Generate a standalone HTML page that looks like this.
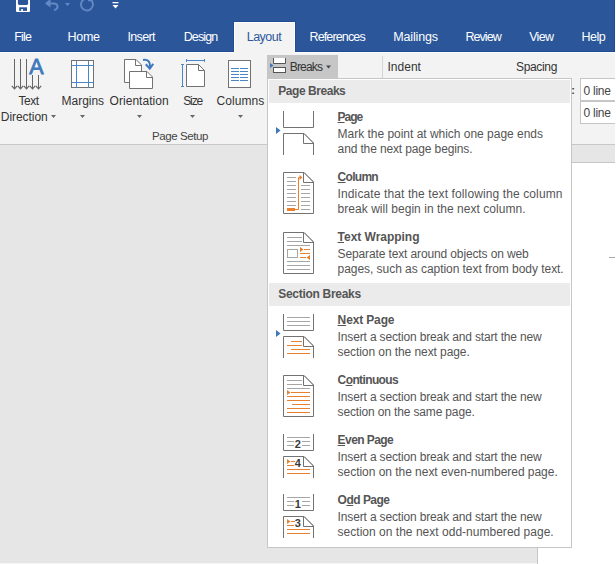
<!DOCTYPE html>
<html><head><meta charset="utf-8"><title>Breaks</title><style>
html,body{margin:0;padding:0}
body{width:616px;height:564px;overflow:hidden;position:relative;background:#e6e6e6;font-family:'Liberation Sans',sans-serif;}
.b{position:absolute}
.t{position:absolute;white-space:pre;line-height:16px;height:16px;}
u{text-decoration:underline;text-underline-offset:0.5px;text-decoration-thickness:1px}
svg{position:absolute;left:0;top:0}
.num{font:bold 11px 'Liberation Sans',sans-serif;fill:#3a3a3a;text-anchor:middle}
</style></head>
<body>

<div class="b" style="left:0;top:0;width:616px;height:52px;background:#2b579a"></div>
<div class="b" style="left:0;top:51px;width:616px;height:1px;background:#1f4c93"></div>
<div class="b" style="left:234px;top:22px;width:61px;height:31px;background:#f3f3f3;border:1px solid #fff;border-bottom:0;box-sizing:border-box;box-shadow:0 0 0 1px #1f4c93"></div>
<div class="b" style="left:0;top:52px;width:616px;height:92px;background:#f3f3f3"></div>
<div class="b" style="left:0;top:52px;width:234px;height:1px;background:#fdfdfd"></div>
<div class="b" style="left:295px;top:52px;width:321px;height:1px;background:#fdfdfd"></div>
<div class="b" style="left:0;top:144px;width:616px;height:1px;background:#c8c8c8"></div>
<div class="b" style="left:382px;top:56px;width:1px;height:23px;background:#d4d4d4"></div>
<div class="b" style="left:537px;top:162px;width:79px;height:402px;background:#fff;border-left:1px solid #c6c6c6;border-top:1px solid #c6c6c6;box-sizing:border-box"></div>
<div class="b" style="left:580px;top:78px;width:36px;height:23px;background:#fff;border:1px solid #c6c6c6;border-right:0;box-sizing:border-box"></div>
<div class="b" style="left:580px;top:101px;width:36px;height:23px;background:#fff;border:1px solid #c6c6c6;border-right:0;box-sizing:border-box"></div>
<div class="b" style="left:267px;top:55px;width:71px;height:24px;background:#c6c6c6"></div>
<div class="b" style="left:267px;top:78px;width:305px;height:470px;background:#fff;border:1px solid #c6c6c6;box-sizing:border-box"></div>
<div class="b" style="left:269px;top:80px;width:301px;height:23px;background:#ebebeb"></div>
<div class="b" style="left:269px;top:283px;width:301px;height:23px;background:#ebebeb"></div>
<div class="b" style="left:609px;top:257px;width:6px;height:1px;background:#ababab"></div>
<div class="b" style="left:614px;top:0;width:1px;height:52px;background:#1f4c93"></div>
<div class="b" style="left:615px;top:0;width:1px;height:564px;background:#fff"></div>
<div class="b" style="left:0;top:563px;width:537px;height:1px;background:#f6f6f6"></div>

<svg width="616" height="564" viewBox="0 0 616 564" shape-rendering="auto">
<path d="M16,-2 H30 V11 Q30,12 29,12 H17 Q16,12 16,11 Z" fill="#fff"/>
<path d="M17.900,-2 H28.100 V3.800 L27.200,5 H18.800 L17.900,3.800 Z" fill="#2b579a"/>
<rect x="19.200" y="7.300" width="7.800" height="3.600" fill="#2b579a"/>
<rect x="21.200" y="9" width="1.700" height="2" fill="#fff"/>
<path d="M48,3.600 H53.500 C58.500,3.600 59,9 54,10.200" fill="none" stroke="#6388c4" stroke-width="2"/><path d="M50.500,-1.500 L45,3.600 L50.500,7.500 Z" fill="#6388c4"/>
<path d="M65,3 h5 l-2.500,3 Z" fill="#6388c4"/>
<path d="M84.500,-1 A6,6 0 1 0 91,0" fill="none" stroke="#6388c4" stroke-width="1.900"/><path d="M88,0.500 H92 V-3" fill="none" stroke="#6388c4" stroke-width="1.600"/>
<rect x="112.500" y="2" width="6" height="1.300" fill="#fff"/><path d="M112.500,5 h6 l-3,3.500 Z" fill="#fff"/>
<rect x="14" y="59" width="1" height="30" fill="#666"/>
<path d="M11.8,85.8 L14.5,88.8 L17.2,85.8" fill="none" stroke="#666" stroke-width="1.2"/>
<rect x="20" y="59" width="1" height="30" fill="#666"/>
<path d="M17.8,85.8 L20.5,88.8 L23.2,85.8" fill="none" stroke="#666" stroke-width="1.2"/>
<rect x="26" y="59" width="1" height="30" fill="#666"/>
<path d="M23.8,85.8 L26.5,88.8 L29.2,85.8" fill="none" stroke="#666" stroke-width="1.2"/>
<rect x="32" y="75" width="1" height="14" fill="#666"/>
<path d="M29.8,85.8 L32.5,88.8 L35.2,85.8" fill="none" stroke="#666" stroke-width="1.2"/>
<rect x="38" y="75" width="1" height="14" fill="#666"/>
<path d="M35.8,85.8 L38.5,88.8 L41.2,85.8" fill="none" stroke="#666" stroke-width="1.2"/>
<text x="36.3" y="74" style="font:21.5px 'Liberation Sans',sans-serif" fill="#3e78bd" stroke="#3e78bd" stroke-width="0.8" text-anchor="middle">A</text>
<path d="M51,115 h5 l-2.5,3 Z" fill="#666"/>
<rect x="71.5" y="60.5" width="22" height="27" fill="#fff" stroke="#727272"/>
<rect x="76" y="61" width="1" height="27" fill="#4a86c8"/>
<rect x="88" y="61" width="1" height="27" fill="#4a86c8"/>
<rect x="72" y="65" width="22" height="1" fill="#4a86c8"/>
<rect x="72" y="82" width="22" height="1" fill="#4a86c8"/>
<path d="M80,115 h5 l-2.5,3 Z" fill="#666"/>
<path d="M124.5,59.5 H136 L141.5,65 V82.5 H124.5 Z" fill="#fff" stroke="#727272"/><path d="M135.5,59.5 V65.5 H141.5" fill="none" stroke="#727272"/>
<path d="M129.5,71.5 H147 L152.5,77 V88.5 H129.5 Z" fill="#fff" stroke="#727272"/><path d="M146.5,71.5 V77.5 H152.5" fill="none" stroke="#727272"/>
<path d="M143,60 C148,59 150.500,62 150,67" fill="none" stroke="#3e78bd" stroke-width="2"/><path d="M145.800,64.300 L149.800,68.600 L153.200,63.800" fill="none" stroke="#3e78bd" stroke-width="2"/>
<path d="M137,115 h5 l-2.5,3 Z" fill="#666"/>
<path d="M186.500,64.500 H198.500 L204.500,70.500 V86.500 H186.500 Z" fill="#fff" stroke="#727272"/><path d="M198.500,64.500 V70.500 H204.500" fill="none" stroke="#727272"/>
<rect x="186" y="60" width="19" height="1" fill="#4a86c8"/>
<rect x="186" y="59" width="1" height="3" fill="#4a86c8"/>
<rect x="204" y="59" width="1" height="3" fill="#4a86c8"/>
<rect x="182" y="64" width="1" height="23" fill="#4a86c8"/>
<rect x="181" y="64" width="3" height="1" fill="#4a86c8"/>
<rect x="181" y="86" width="3" height="1" fill="#4a86c8"/>
<path d="M190,115 h5 l-2.5,3 Z" fill="#666"/>
<rect x="228.500" y="60.500" width="22" height="27" fill="#fff" stroke="#727272"/>
<rect x="231" y="68" width="8" height="1" fill="#4a86c8"/>
<rect x="240" y="68" width="8" height="1" fill="#4a86c8"/>
<rect x="231" y="71" width="8" height="1" fill="#4a86c8"/>
<rect x="240" y="71" width="8" height="1" fill="#4a86c8"/>
<rect x="231" y="74" width="8" height="1" fill="#4a86c8"/>
<rect x="240" y="74" width="8" height="1" fill="#4a86c8"/>
<rect x="231" y="77" width="8" height="1" fill="#4a86c8"/>
<rect x="240" y="77" width="8" height="1" fill="#4a86c8"/>
<rect x="231" y="80" width="8" height="1" fill="#4a86c8"/>
<rect x="240" y="80" width="8" height="1" fill="#4a86c8"/>
<path d="M238,115 h5 l-2.5,3 Z" fill="#666"/>
<path d="M270,63 L273.5,65.5 L270,68 Z" fill="#3e78bd"/>
<rect x="274" y="58" width="12" height="5" fill="#fff"/><path d="M273.500,58 V63.500 H285.500 V58" fill="none" stroke="#555"/>
<rect x="273.500" y="67.500" width="12" height="5" fill="#fff" stroke="#555"/>
<path d="M326,65.5 h5 l-2.5,3 Z" fill="#444"/>
<path d="M283.5,111 V127.5 H313.5 V111" fill="#fff" stroke="#727272"/><path d="M283.5,155 V133.5 H304 L313.5,143 V155 " fill="#fff" stroke="#727272"/><path d="M303.5,133.5 V143.5 H313.5" fill="none" stroke="#727272"/><path d="M304,133.5 L313.5,143" fill="none" stroke="#727272" stroke-width="0.8"/>
<path d="M276,127 L280.5,130.5 L276,134 Z" fill="#3e78bd"/>
<path d="M283.5,172.5 H304 L313.5,182 V213.5 H283.5 Z" fill="#fff" stroke="#727272"/><path d="M303.5,172.5 V182.5 H313.5" fill="none" stroke="#727272"/><path d="M304,172.5 L313.5,182" fill="none" stroke="#727272" stroke-width="0.8"/>
<rect x="287" y="177" width="9" height="1" fill="#a6a6a6"/>
<rect x="287" y="181" width="9" height="1" fill="#a6a6a6"/>
<rect x="287" y="185" width="9" height="1" fill="#a6a6a6"/>
<rect x="287" y="189" width="9" height="1" fill="#a6a6a6"/>
<rect x="287" y="193" width="9" height="1" fill="#a6a6a6"/>
<rect x="287" y="197" width="9" height="1" fill="#a6a6a6"/>
<rect x="287" y="201" width="9" height="1" fill="#a6a6a6"/>
<rect x="287" y="205" width="9" height="1" fill="#a6a6a6"/>
<rect x="301" y="185" width="9" height="1" fill="#a6a6a6"/>
<rect x="301" y="189" width="9" height="1" fill="#a6a6a6"/>
<rect x="301" y="193" width="9" height="1" fill="#a6a6a6"/>
<rect x="301" y="197" width="9" height="1" fill="#a6a6a6"/>
<rect x="301" y="201" width="9" height="1" fill="#a6a6a6"/>
<rect x="301" y="205" width="9" height="1" fill="#a6a6a6"/>
<rect x="301" y="209" width="9" height="1" fill="#a6a6a6"/>
<rect x="287" y="208" width="8" height="3" fill="#e8812f"/>
<path d="M295,209.5 H298.5 V177.5 H300" fill="none" stroke="#e8812f"/>
<path d="M299.5,175 L302.5,177.5 L299.5,180 Z" fill="#e8812f"/>
<path d="M283.5,232.5 H304 L313.5,242 V273.5 H283.5 Z" fill="#fff" stroke="#727272"/><path d="M303.5,232.5 V242.5 H313.5" fill="none" stroke="#727272"/><path d="M304,232.5 L313.5,242" fill="none" stroke="#727272" stroke-width="0.8"/>
<rect x="287" y="237" width="15" height="1" fill="#a6a6a6"/>
<rect x="287" y="241" width="15" height="1" fill="#a6a6a6"/>
<rect x="287" y="245" width="23" height="1" fill="#a6a6a6"/>
<rect x="287" y="261" width="23" height="1" fill="#a6a6a6"/>
<rect x="287" y="265" width="23" height="1" fill="#a6a6a6"/>
<rect x="287" y="269" width="23" height="1" fill="#a6a6a6"/>
<rect x="287.5" y="249.5" width="10" height="8" fill="#fff" stroke="#a6a6a6"/>
<path d="M300,247 L303.5,249.5 L300,252 Z" fill="#e8812f"/>
<rect x="304" y="249" width="6" height="1" fill="#e8812f"/>
<rect x="300" y="253" width="10" height="1" fill="#e8812f"/>
<rect x="300" y="257" width="6" height="1" fill="#e8812f"/>
<path d="M310.0,255 L306.5,257.5 L310.0,260 Z" fill="#e8812f"/>
<path d="M283.5,314 V330.5 H313.5 V314" fill="#fff" stroke="#727272"/><path d="M283.5,358 V336.5 H304 L313.5,346 V358 " fill="#fff" stroke="#727272"/><path d="M303.5,336.5 V346.5 H313.5" fill="none" stroke="#727272"/><path d="M304,336.5 L313.5,346" fill="none" stroke="#727272" stroke-width="0.8"/>
<path d="M276,330 L280.5,333.5 L276,337 Z" fill="#3e78bd"/>
<rect x="287" y="317" width="23" height="1" fill="#a6a6a6"/>
<rect x="287" y="321" width="23" height="1" fill="#a6a6a6"/>
<rect x="287" y="325" width="23" height="1" fill="#a6a6a6"/>
<rect x="291" y="341" width="11" height="1" fill="#e8812f"/>
<rect x="287" y="345" width="15" height="1" fill="#e8812f"/>
<rect x="291" y="349" width="19" height="1" fill="#e8812f"/>
<rect x="287" y="353" width="23" height="1" fill="#e8812f"/>
<path d="M283.5,375.5 H304 L313.5,385 V416.5 H283.5 Z" fill="#fff" stroke="#727272"/><path d="M303.5,375.5 V385.5 H313.5" fill="none" stroke="#727272"/><path d="M304,375.5 L313.5,385" fill="none" stroke="#727272" stroke-width="0.8"/>
<rect x="287" y="380" width="15" height="1" fill="#a6a6a6"/>
<rect x="287" y="384" width="15" height="1" fill="#a6a6a6"/>
<rect x="287" y="388" width="23" height="1" fill="#a6a6a6"/>
<path d="M287,390 L290.5,392.5 L287,395 Z" fill="#e8812f"/>
<rect x="291" y="392" width="19" height="1" fill="#e8812f"/>
<rect x="287" y="396" width="23" height="1" fill="#e8812f"/>
<rect x="287" y="400" width="23" height="1" fill="#e8812f"/>
<rect x="292" y="404" width="18" height="1" fill="#e8812f"/>
<rect x="287" y="408" width="23" height="1" fill="#e8812f"/>
<rect x="287" y="412" width="23" height="1" fill="#e8812f"/>
<path d="M283.5,434 V450.5 H313.5 V434" fill="#fff" stroke="#727272"/><path d="M283.5,478 V456.5 H304 L313.5,466 V478 " fill="#fff" stroke="#727272"/><path d="M303.5,456.5 V466.5 H313.5" fill="none" stroke="#727272"/><path d="M304,456.5 L313.5,466" fill="none" stroke="#727272" stroke-width="0.8"/>
<rect x="287" y="437" width="23" height="1" fill="#a6a6a6"/>
<rect x="287" y="441" width="7" height="1" fill="#a6a6a6"/>
<rect x="302" y="441" width="8" height="1" fill="#a6a6a6"/>
<rect x="287" y="445" width="7" height="1" fill="#a6a6a6"/>
<rect x="302" y="445" width="8" height="1" fill="#a6a6a6"/>
<text x="297.8" y="448" class="num">2</text>
<path d="M287,459 L290.5,461.5 L287,464 Z" fill="#e8812f"/>
<rect x="291" y="461" width="4" height="1" fill="#e8812f"/>
<rect x="287" y="465" width="7" height="1" fill="#e8812f"/>
<text x="297.8" y="467" class="num">4</text>
<rect x="287" y="469" width="23" height="1" fill="#e8812f"/>
<rect x="287" y="473" width="23" height="1" fill="#e8812f"/>
<path d="M283.5,494 V510.5 H313.5 V494" fill="#fff" stroke="#727272"/><path d="M283.5,538 V516.5 H304 L313.5,526 V538 " fill="#fff" stroke="#727272"/><path d="M303.5,516.5 V526.5 H313.5" fill="none" stroke="#727272"/><path d="M304,516.5 L313.5,526" fill="none" stroke="#727272" stroke-width="0.8"/>
<rect x="287" y="497" width="23" height="1" fill="#a6a6a6"/>
<rect x="287" y="501" width="7" height="1" fill="#a6a6a6"/>
<rect x="302" y="501" width="8" height="1" fill="#a6a6a6"/>
<rect x="287" y="505" width="7" height="1" fill="#a6a6a6"/>
<rect x="302" y="505" width="8" height="1" fill="#a6a6a6"/>
<text x="297.8" y="508" class="num">1</text>
<path d="M287,519 L290.5,521.5 L287,524 Z" fill="#e8812f"/>
<rect x="291" y="521" width="4" height="1" fill="#e8812f"/>
<rect x="287" y="525" width="7" height="1" fill="#e8812f"/>
<text x="297.8" y="527" class="num">3</text>
<rect x="287" y="529" width="23" height="1" fill="#e8812f"/>
<rect x="287" y="533" width="23" height="1" fill="#e8812f"/>
</svg>
<span class="t" style="left:14.2px;top:29.0px;font-size:12.5px;color:#fff;letter-spacing:-0.785px;">File</span>
<span class="t" style="left:67.6px;top:29.0px;font-size:12.5px;color:#fff;letter-spacing:-0.315px;">Home</span>
<span class="t" style="left:127.5px;top:29.0px;font-size:12.5px;color:#fff;letter-spacing:-0.653px;">Insert</span>
<span class="t" style="left:183.7px;top:29.0px;font-size:12.5px;color:#fff;letter-spacing:-0.884px;">Design</span>
<span class="t" style="left:246.7px;top:29.0px;font-size:12.5px;color:#2b579a;letter-spacing:-0.506px;">Layout</span>
<span class="t" style="left:309.5px;top:29.0px;font-size:12.5px;color:#fff;letter-spacing:-0.860px;">References</span>
<span class="t" style="left:393.2px;top:29.0px;font-size:12.5px;color:#fff;letter-spacing:-0.151px;">Mailings</span>
<span class="t" style="left:465.5px;top:29.0px;font-size:12.5px;color:#fff;letter-spacing:-0.960px;">Review</span>
<span class="t" style="left:529.2px;top:29.0px;font-size:12.5px;color:#fff;letter-spacing:-0.692px;">View</span>
<span class="t" style="left:581.4px;top:29.0px;font-size:12.5px;color:#fff;letter-spacing:-0.440px;">Help</span>
<span class="t" style="left:18.4px;top:93.0px;font-size:12px;color:#333;letter-spacing:-0.439px;">Text</span>
<span class="t" style="left:0.8px;top:109.0px;font-size:12px;color:#333;letter-spacing:-0.057px;">Direction</span>
<span class="t" style="left:61.6px;top:93.0px;font-size:12px;color:#333;letter-spacing:-0.031px;">Margins</span>
<span class="t" style="left:109.6px;top:93.0px;font-size:12px;color:#333;letter-spacing:0.030px;">Orientation</span>
<span class="t" style="left:183.2px;top:93.0px;font-size:12px;color:#333;letter-spacing:-1.081px;">Size</span>
<span class="t" style="left:216.5px;top:93.0px;font-size:12px;color:#333;letter-spacing:0.057px;">Columns</span>
<span class="t" style="left:151.9px;top:128.0px;font-size:11.5px;color:#444;letter-spacing:-0.390px;">Page Setup</span>
<span class="t" style="left:289.8px;top:58.5px;font-size:12px;color:#333;letter-spacing:-0.852px;">Breaks</span>
<span class="t" style="left:387.5px;top:58.5px;font-size:12px;color:#333;letter-spacing:0.005px;">Indent</span>
<span class="t" style="left:516.0px;top:58.5px;font-size:12px;color:#333;letter-spacing:-0.329px;">Spacing</span>
<span class="t" style="left:571.2px;top:82.0px;font-size:11px;color:#444;letter-spacing:0.000px;font-weight:700;">:</span>
<span class="t" style="left:583.4px;top:82.5px;font-size:12px;color:#444;letter-spacing:-0.217px;">0 line</span>
<span class="t" style="left:583.4px;top:105.0px;font-size:12px;color:#444;letter-spacing:-0.217px;">0 line</span>
<span class="t" style="left:278.3px;top:83.0px;font-size:12px;color:#555;letter-spacing:-0.455px;font-weight:700;">Page Breaks</span>
<span class="t" style="left:278.2px;top:286.0px;font-size:12px;color:#555;letter-spacing:-0.286px;font-weight:700;">Section Breaks</span>
<span class="t" style="left:337.6px;top:109.0px;font-size:12px;color:#555;letter-spacing:-1.029px;font-weight:700;"><u>P</u>age</span>
<span class="t" style="left:337.6px;top:126.0px;font-size:12px;color:#555;letter-spacing:-0.021px;">Mark the point at which one page ends</span>
<span class="t" style="left:337.6px;top:141.0px;font-size:12px;color:#555;letter-spacing:-0.134px;">and the next page begins.</span>
<span class="t" style="left:337.6px;top:169.0px;font-size:12px;color:#555;letter-spacing:-0.714px;font-weight:700;"><u>C</u>olumn</span>
<span class="t" style="left:337.6px;top:186.0px;font-size:12px;color:#555;letter-spacing:0.113px;">Indicate that the text following the column</span>
<span class="t" style="left:337.6px;top:201.0px;font-size:12px;color:#555;letter-spacing:0.032px;">break will begin in the next column.</span>
<span class="t" style="left:337.6px;top:229.0px;font-size:12px;color:#555;letter-spacing:-0.028px;font-weight:700;"><u>T</u>ext Wrapping</span>
<span class="t" style="left:337.6px;top:246.0px;font-size:12px;color:#555;letter-spacing:-0.128px;">Separate text around objects on web</span>
<span class="t" style="left:337.6px;top:261.0px;font-size:12px;color:#555;letter-spacing:-0.048px;">pages, such as caption text from body text.</span>
<span class="t" style="left:337.6px;top:312.0px;font-size:12px;color:#555;letter-spacing:-0.141px;font-weight:700;"><u>N</u>ext Page</span>
<span class="t" style="left:337.6px;top:329.0px;font-size:12px;color:#555;letter-spacing:-0.152px;">Insert a section break and start the new</span>
<span class="t" style="left:337.6px;top:344.0px;font-size:12px;color:#555;letter-spacing:-0.080px;">section on the next page.</span>
<span class="t" style="left:337.6px;top:372.0px;font-size:12px;color:#555;letter-spacing:-0.617px;font-weight:700;">C<u>o</u>ntinuous</span>
<span class="t" style="left:337.6px;top:389.0px;font-size:12px;color:#555;letter-spacing:-0.152px;">Insert a section break and start the new</span>
<span class="t" style="left:337.6px;top:404.0px;font-size:12px;color:#555;letter-spacing:-0.149px;">section on the same page.</span>
<span class="t" style="left:337.6px;top:432.0px;font-size:12px;color:#555;letter-spacing:-0.575px;font-weight:700;"><u>E</u>ven Page</span>
<span class="t" style="left:337.6px;top:449.0px;font-size:12px;color:#555;letter-spacing:-0.152px;">Insert a section break and start the new</span>
<span class="t" style="left:337.6px;top:464.0px;font-size:12px;color:#555;letter-spacing:-0.036px;">section on the next even-numbered page.</span>
<span class="t" style="left:337.6px;top:492.0px;font-size:12px;color:#555;letter-spacing:-0.517px;font-weight:700;">O<u>d</u>d Page</span>
<span class="t" style="left:337.6px;top:509.0px;font-size:12px;color:#555;letter-spacing:-0.152px;">Insert a section break and start the new</span>
<span class="t" style="left:337.6px;top:524.0px;font-size:12px;color:#555;letter-spacing:0.017px;">section on the next odd-numbered page.</span>
</body></html>
